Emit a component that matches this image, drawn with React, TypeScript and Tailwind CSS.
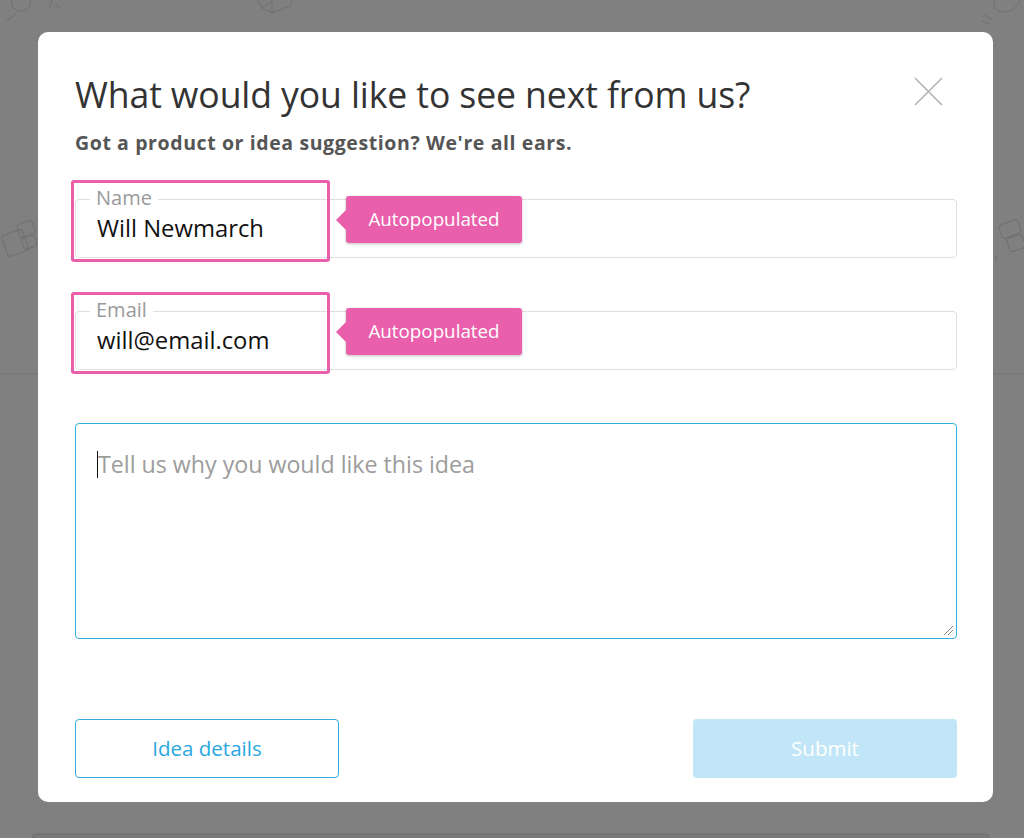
import React from "react";

const font = { fontFamily: '"Open Sans", "Noto Sans", sans-serif' };

function Field({ label, value }: { label: string; value: string }) {
  return (
    <div className="relative h-[59px]">
      <div className="h-[59px] rounded-[4px] border border-[#dedede]" />
      <span className="absolute left-[15px] top-[-13px] bg-white px-[6px] text-[20px] leading-[24px] text-[#9a9a9a]">
        {label}
      </span>
      <span className="absolute left-[22px] top-[15px] text-[23.8px] leading-[28px] text-[#111]">{value}</span>
      <div className="pointer-events-none absolute left-[-4px] top-[-19px] h-[82px] w-[259px] rounded-[3px] border-[3px] border-[#e95fab]" />
      <div className="absolute left-[271px] top-[-3px] flex h-[47px] w-[176px] items-center justify-center rounded-[3px] bg-[#e95fab] text-[18.8px] text-white shadow-[0_1px_3px_rgba(0,0,0,0.25)]">
        <span className="absolute left-[-10px] top-[13px] h-0 w-0 border-y-[11px] border-r-[11px] border-y-transparent border-r-[#e95fab]" />
        Autopopulated
      </div>
    </div>
  );
}

export default function App() {
  return (
    <div className="relative h-[838px] w-[1024px] overflow-hidden bg-[#808080]" style={font}>
      {/* background decorations */}
      <svg className="absolute left-0 top-0" width="1024" height="838" fill="none" stroke="#6f6f6f" strokeWidth="1">
        <path d="M12 0 C10 6 16 12 22 11 C28 10 32 6 30 0" />
        <path d="M16 13 L8 20 M12 16 L6 22" />
        <path d="M52 0 L50 8 M55 4 L60 8" />
        <path d="M258 0 L262 8 L272 13 L290 6 L292 0" />
        <path d="M262 8 L272 1 L272 13" />
        <path d="M995 0 C992 6 996 12 1004 12 C1012 12 1018 6 1020 0" />
        <path d="M984 15 L993 20 M982 21 L990 24" />
        <path d="M0 374 L1024 374" stroke="#767676" />
        <rect x="4" y="232" width="22" height="22" rx="3" transform="rotate(-20 15 243)" />
        <rect x="18" y="222" width="16" height="14" rx="3" transform="rotate(-20 26 229)" />
        <rect x="22" y="236" width="14" height="12" rx="3" transform="rotate(-20 29 242)" />
        <rect x="1000" y="222" width="20" height="14" rx="3" transform="rotate(-20 1010 229)" />
        <rect x="1008" y="236" width="16" height="14" rx="3" transform="rotate(-20 1016 243)" />
        <path d="M996 255 L996 262" />
        <rect x="33" y="834" width="955" height="20" rx="3" fill="#7a7a7a" stroke="#6c6c6c" />
      </svg>

      <div className="relative pl-[38px] pt-[32px]">
        <div className="flex h-[770px] w-[955px] flex-col rounded-[10px] bg-white pl-[37px] pr-[36px] pt-[40px]">
          <div className="flex items-start justify-between">
            <h1 className="text-[35.6px] font-normal leading-[44px] tracking-[-0.1px] text-[#333]">
              What would you like to see next from us?
            </h1>
            <svg className="mr-[14px] mt-[5px]" width="29" height="29" viewBox="0 0 29 29" stroke="#b3b3b3" strokeWidth="1.6">
              <path d="M1 1 L28 28 M28 1 L1 28" />
            </svg>
          </div>
          <p className="mt-[14px] text-[19.5px] font-bold leading-[26px] tracking-[0.6px] text-[#555]">
            Got a product or idea suggestion? We're all ears.
          </p>

          <div className="mt-[43px] flex flex-col gap-[53px]">
            <Field label="Name" value="Will Newmarch" />
            <Field label="Email" value="will@email.com" />
          </div>

          <div className="relative mt-[53px] h-[216px] rounded-[4px] border-[1.5px] border-[#2eaee3]">
            <span className="absolute left-[21px] top-[27px] h-[27px] w-px bg-[#111]" />
            <span className="absolute left-[22px] top-[25px] text-[23.2px] leading-[30px] text-[#9c9c9c]">
              Tell us why you would like this idea
            </span>
            <svg className="absolute bottom-[2px] right-[2px]" width="12" height="12" stroke="#888" strokeWidth="1">
              <path d="M2 11 L11 2 M6 11 L11 6" />
            </svg>
          </div>

          <div className="mt-[80px] flex justify-between">
            <button className="flex h-[59px] w-[264px] items-center justify-center rounded-[4px] border-[1.5px] border-[#32ace1] bg-white text-[20.5px] text-[#2aa7df]">
              Idea details
            </button>
            <button className="flex h-[59px] w-[264px] items-center justify-center rounded-[4px] bg-[#c1e6f7] text-[20.5px] text-white">
              Submit
            </button>
          </div>
        </div>
      </div>
    </div>
  );
}
